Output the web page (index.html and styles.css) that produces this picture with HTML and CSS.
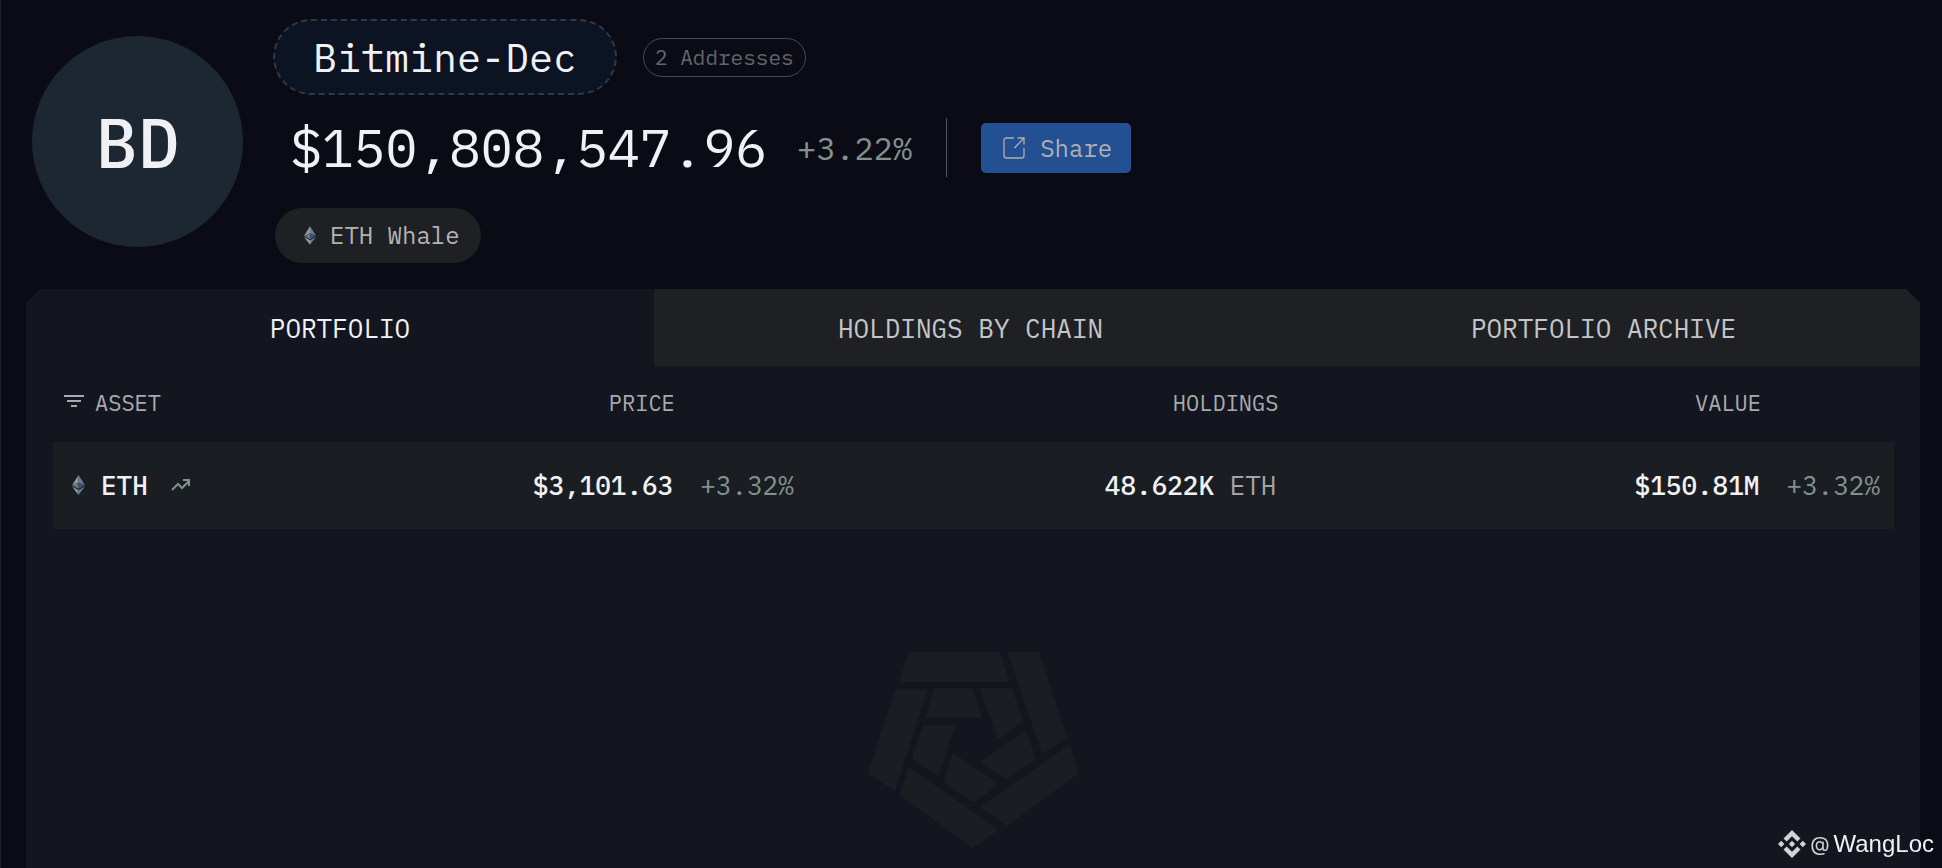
FILE: index.html
```
<!DOCTYPE html>
<html lang="en">
<head>
  <meta charset="UTF-8" />
  <meta name="viewport" content="width=device-width, initial-scale=1.0"/>
  <title>Bitmine-Dec</title>
  <link rel="stylesheet" href="styles.css">
</head>
<body>
  <svg class="defs" aria-hidden="true">
    <symbol id="eth" viewBox="0 0 13 20">
      <path d="M6.500 0 0 10.200 6.500 7.500z" fill="#8d98a0"/>
      <path d="M6.500 0 13 10.200 6.500 7.500z" fill="#6f7d88"/>
      <path d="M0 10.200 6.500 7.500V14z" fill="#66758a"/>
      <path d="M13 10.200 6.500 7.500V14z" fill="#3c5078"/>
      <path d="M0 11.500 6.500 15.200V20z" fill="#929b9f"/>
      <path d="M13 11.500 6.500 15.200V20z" fill="#6b7984"/>
    </symbol>
  </svg>

  <header class="entity">
    <div class="avatar">BD</div>
    <div class="info">
      <div class="name-row">
        <h1 class="name">Bitmine-Dec</h1>
        <a class="addresses" href="#addresses">2 Addresses</a>
      </div>
      <div class="balance-row">
        <span class="balance">$150,808,547.96</span>
        <span class="balance-change">+3.22%</span>
        <span class="divider"></span>
        <button type="button" class="share">
          <svg width="22" height="22" viewBox="0 0 22 22" fill="none" stroke="currentColor" stroke-width="1.300" aria-hidden="true">
            <path d="M11 1H3.500Q1 1 1 3.500V18.500Q1 21 3.500 21H18.500Q21 21 21 18.500V11"/>
            <path d="M11.500 11 21 1M14.500 1H21V7.500"/>
          </svg>
          Share
        </button>
      </div>
      <a class="tag" href="#eth-whale">
        <svg width="12" height="19" aria-hidden="true"><use href="#eth"/></svg>
        ETH Whale
      </a>
    </div>
  </header>

  <main class="panel">
    <nav class="tabs">
      <button type="button" class="tab active">PORTFOLIO</button>
      <button type="button" class="tab">HOLDINGS BY CHAIN</button>
      <button type="button" class="tab">PORTFOLIO ARCHIVE</button>
    </nav>

    <table class="holdings">
      <thead>
        <tr>
          <th class="asset">
            <div class="cell">
              <svg class="filter" width="20" height="16" viewBox="0 0 20 16" stroke="currentColor" stroke-width="2" aria-hidden="true">
                <path d="M0 2H20M3 7H17M7 12H13"/>
              </svg>
              ASSET
            </div>
          </th>
          <th class="price">PRICE</th>
          <th class="amount">HOLDINGS</th>
          <th class="value">VALUE</th>
        </tr>
      </thead>
      <tbody>
        <tr>
          <td>
            <div class="cell">
              <svg class="coin" width="13" height="20" aria-hidden="true"><use href="#eth"/></svg>
              <a class="symbol" href="#eth">ETH</a>
              <svg class="trend" width="20" height="14" viewBox="0 0 20 14" fill="none" stroke="currentColor" stroke-width="2" aria-hidden="true">
                <path d="M1 12 7 6 11 10 18 3M12 2H18V8"/>
              </svg>
            </div>
          </td>
          <td>$3,101.63<span class="change">+3.32%</span></td>
          <td>48.622K <span class="unit">ETH</span></td>
          <td>$150.81M<span class="change">+3.32%</span></td>
        </tr>
      </tbody>
    </table>

    <svg class="watermark" viewBox="84 66 633 588" aria-hidden="true">
      <path d="M205 66H480L508 157H177z"/>
      <path d="M502 66H598L681 323 607 373z"/>
      <path d="M167 178H264L164 484 84 430z"/>
      <path d="M284 174H398L426 265H256z"/>
      <path d="M419 174H516L549 275 474 328z"/>
      <path d="M248 286H345L296 440 216 386z"/>
      <path d="M557 300 587 388 499 449 420 397z"/>
      <path d="M338 368 478 463 401 517 311 457z"/>
      <path d="M207 412 477 599 399 653 177 494z"/>
      <path d="M690 342 717 430 500 588 422 532z"/>
    </svg>
  </main>

  <div class="credit">
    <svg width="28" height="28" viewBox="0 0 28 28" fill="#d2d3d5" aria-hidden="true">
      <path d="M14 0 22.500 8.500 19.300 11.600 14 6.300 8.700 11.600 5.500 8.500z"/>
      <path d="M14 28 22.500 19.500 19.300 16.400 14 21.700 8.700 16.400 5.500 19.500z"/>
      <path d="M3.200 10.800 6.400 14 3.200 17.200 0 14z"/>
      <path d="M24.800 10.800 28 14 24.800 17.200 21.600 14z"/>
      <path d="M14 10.800 17.200 14 14 17.200 10.800 14z"/>
    </svg>
    <span class="at">@</span>
    <span>WangLoc</span>
  </div>
</body>
</html>
```
FILE: styles.css
```
* { box-sizing: border-box; margin: 0; padding: 0; }

body {
  font-family: 'IBM Plex Mono', 'Liberation Mono', monospace;
  background-color: #0b0b15;
  color: #f0f1f5;
  min-height: 100vh;
  display: flex;
  flex-direction: column;
  border-left: 1px solid #15232c;
}

a {
  color: inherit;
  text-decoration: none;
}

button {
  font-family: inherit;
  border: none;
  cursor: pointer;
}

svg {
  flex-shrink: 0;
}

.defs {
  position: absolute;
  width: 0;
  height: 0;
}

.entity {
  display: flex;
  align-items: center;
  gap: 30px;
  padding: 19px 31px 26px;
}

.avatar {
  display: flex;
  align-items: center;
  justify-content: center;
  flex-shrink: 0;
  width: 211px;
  height: 211px;
  border-radius: 50%;
  background-color: #1c2731;
  font-size: 70px;
  font-weight: 500;
}

.info {
  display: flex;
  flex-direction: column;
  align-items: flex-start;
  gap: 23px;
}

.name-row {
  display: flex;
  align-items: center;
  gap: 26px;
}

.name {
  padding: 0 38px;
  border: 2px dashed #2c3a4b;
  border-radius: 38px;
  background-color: #0c1322;
  font-size: 40px;
  line-height: 72px;
  font-weight: 400;
}

.addresses {
  padding: 0 11px;
  border: 1px solid #464a52;
  border-radius: 20px;
  color: #62656b;
  font-size: 21px;
  line-height: 37px;
}

.balance-row {
  display: flex;
  align-items: center;
  padding-left: 17px;
}

.balance {
  font-size: 53px;
  line-height: 59px;
}

.balance-change {
  margin-left: 30px;
  color: #82918e;
  font-size: 32px;
}

.divider {
  width: 1px;
  height: 59px;
  margin: 0 34px;
  background-color: #54565e;
}

.share {
  display: flex;
  align-items: center;
  gap: 15px;
  height: 50px;
  padding: 0 19px 0 22px;
  border-radius: 5px;
  background-color: #234f93;
  color: #b0afb0;
  font-size: 24px;
}

.tag {
  display: flex;
  align-items: center;
  gap: 14px;
  margin: 8px 0 0 2px;
  padding: 0 21px 0 29px;
  border-radius: 28px;
  background-color: #1f2024;
  color: #b2b3b6;
  font-size: 24px;
  line-height: 55px;
}

.panel {
  flex-grow: 1;
  margin: 0 22px 0 25px;
  background-color: #13161e;
  clip-path: polygon(14px 0, calc(100% - 14px) 0, 100% 14px, 100% 100%, 0 100%, 0 14px);
}

.tabs {
  display: grid;
  grid-template-columns: 628fr 633fr 633fr;
}

.tab {
  height: 77px;
  background-color: #1f2024;
  color: #c4c5c8;
  font-size: 26px;
}

.tab.active {
  background-color: #13161e;
  color: #f0f1f5;
}

.holdings {
  width: calc(100% - 53px);
  margin: 0 26px 0 27px;
  table-layout: fixed;
  border-collapse: collapse;
  text-align: right;
}

.holdings th {
  height: 76px;
  padding-bottom: 4px;
  color: #a9aaae;
  font-size: 22px;
  font-weight: 400;
}

.holdings td {
  height: 87px;
  padding-bottom: 2px;
  background-color: #1a1d22;
  font-size: 26px;
  font-weight: 500;
}

.cell {
  display: flex;
  align-items: center;
}

.asset { width: 20%; }
.holdings .price { width: 21%; padding-right: 133px; }
.holdings .amount { width: 26%; padding-right: 8px; }
.holdings .value { padding-right: 133px; }

.holdings td:nth-child(2) {
  padding-right: 14px;
}

.holdings td:nth-child(3) {
  padding-right: 10px;
}

.holdings td:last-child {
  padding-right: 14px;
}

.filter {
  margin: 0 11px;
}

.coin {
  margin: 0 16px 0 19px;
}

.trend {
  margin-left: 23px;
  color: #82918e;
}

.change {
  margin-left: 27px;
  color: #82918e;
  font-weight: 400;
}

.unit {
  color: #a3a4a8;
  font-weight: 400;
}

.watermark {
  display: block;
  width: 211px;
  margin: 123px auto 20px;
  fill: #1a1d22;
}

.credit {
  position: fixed;
  right: 8px;
  bottom: 10px;
  display: flex;
  align-items: center;
  gap: 4px;
  font-family: 'Liberation Sans', Arial, sans-serif;
  font-size: 24px;
}

.at {
  color: #d2d3d5;
  font-family: Inter, sans-serif;
  font-size: 20px;
}
```
